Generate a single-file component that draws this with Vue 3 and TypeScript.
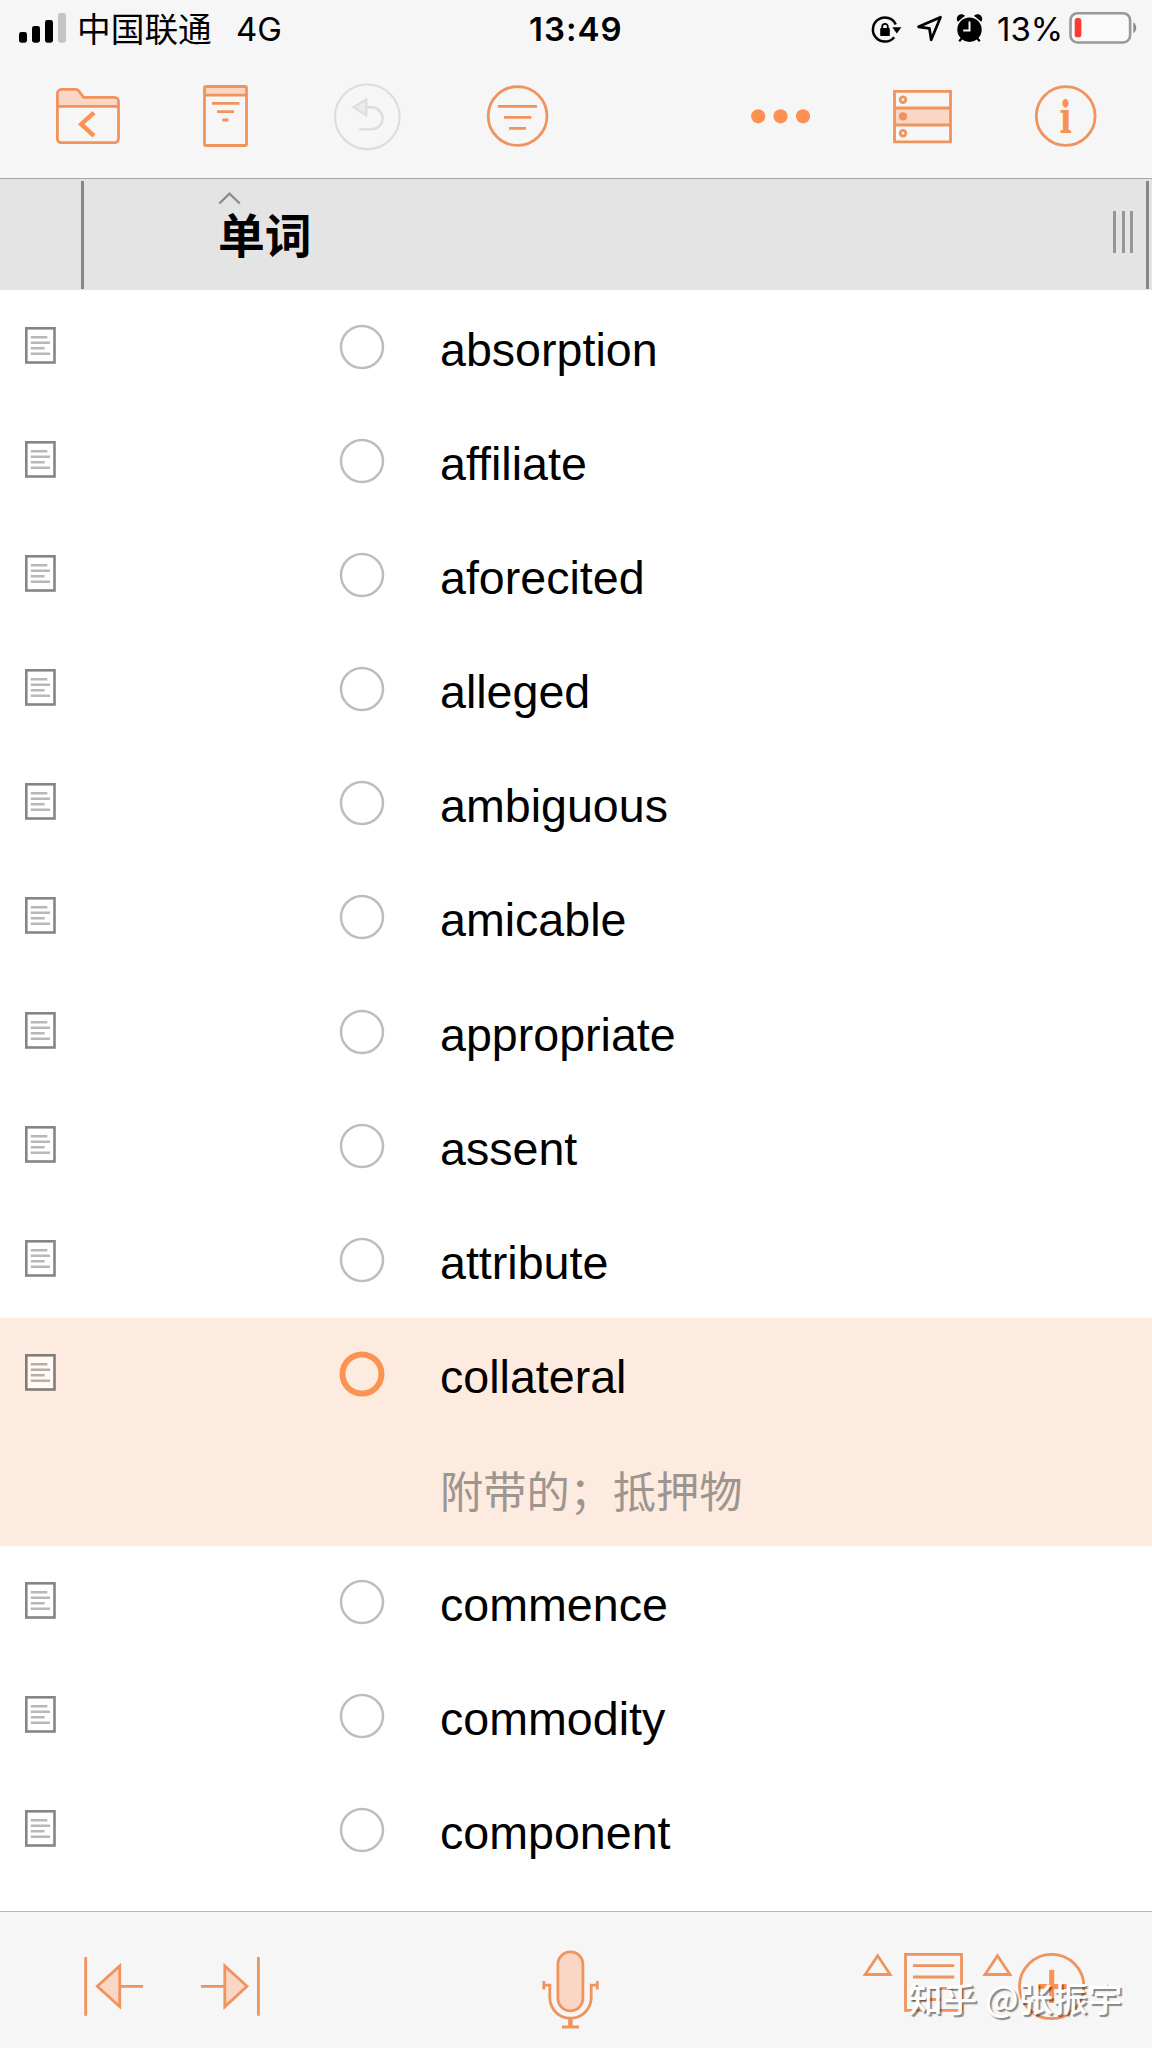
<script setup lang="ts">
interface Entry {
  word: string
  note?: string
  selected?: boolean
}

const entries: Entry[] = [
  { word: 'absorption' },
  { word: 'affiliate' },
  { word: 'aforecited' },
  { word: 'alleged' },
  { word: 'ambiguous' },
  { word: 'amicable' },
  { word: 'appropriate' },
  { word: 'assent' },
  { word: 'attribute' },
  { word: 'collateral', note: '附带的；抵押物', selected: true },
  { word: 'commence' },
  { word: 'commodity' },
  { word: 'component' },
]
</script>

<template>
  <div class="screen">
    <header class="top">
      <div class="status">
        <svg class="signal" width="48" height="30" viewBox="19 13 48 30">
          <rect x="19" y="32" width="8" height="10.7" rx="2.4" />
          <rect x="32" y="26" width="8" height="16.7" rx="2.4" />
          <rect x="45" y="20" width="8" height="22.7" rx="2.4" />
          <rect x="58" y="13" width="8" height="29.7" rx="2.4" fill="#c4c4c4" />
        </svg>
        <span class="carrier">中国联通</span>
        <span class="network">4G</span>
        <span class="clock">13:49</span>
        <svg class="indicators" width="118" height="58" viewBox="868 0 118 58">
          <path d="M895.8 24.5A12 12 0 1 0 894.2 37.2" fill="none" stroke="#000" stroke-width="2.5" />
          <path d="M892.3 27.2H901.4L896.8 33.6Z" />
          <rect x="880.2" y="28" width="9.6" height="8" rx=".8" />
          <path d="M882.2 29v-2.3a2.8 2.8 0 0 1 5.6 0V29" fill="none" stroke="#000" stroke-width="1.8" />
          <path d="M918.5 26.8L940.5 17.2L931.2 39.8L929.4 28.4Z" fill="none" stroke="#000" stroke-width="2.7" stroke-linejoin="round" />
          <circle cx="969.5" cy="29.7" r="12.2" />
          <path d="M958.4 21.3a3.9 3.9 0 0 1 6-5M974.6 16.3a3.9 3.9 0 0 1 6 5" fill="#000" stroke="#000" stroke-width="1.4" />
          <path d="M962.5 37.5l-3.3 3.7M976.5 37.5l3.3 3.7" stroke="#000" stroke-width="2.2" />
          <path d="M969.5 21.6V30.4H963.2" fill="none" stroke="#f6f6f6" stroke-width="2" />
        </svg>
        <span class="percent">13%</span>
        <svg class="battery" width="70" height="34" viewBox="1069 11 70 34">
          <rect x="1070.5" y="13.2" width="59.6" height="29.3" rx="7" fill="#fafafa" stroke="#999" stroke-width="2.6" />
          <rect x="1074.7" y="18" width="6.6" height="19.3" rx="2.6" fill="#fb3b30" />
          <path d="M1133.3 22.3a6.6 6.6 0 0 1 0 11z" fill="#8c8c8c" />
        </svg>
      </div>

      <div class="tools">
        <svg class="folder" width="66" height="120" viewBox="55 58 66 120">
          <path d="M57.4 106V93.5a4 4 0 0 1 4-4.1H75.5a4 4 0 0 1 3.2 1.5L83.6 97.4H114.5a4 4 0 0 1 4 4V106Z" class="tint" />
          <path d="M57.4 93.5a4 4 0 0 1 4-4.1H75.5a4 4 0 0 1 3.2 1.5L83.6 97.4H114.5a4 4 0 0 1 4 4V138.6a4 4 0 0 1-4 4H61.4a4 4 0 0 1-4-4ZM57 106.3H119" class="line" />
          <path d="M94 112.6L81.2 124.2L94 135.9" fill="none" stroke="#fd9151" stroke-width="4.4" />
        </svg>
        <svg class="archive" width="46" height="120" viewBox="203 58 46 120">
          <rect x="204.5" y="86.3" width="42" height="9" class="tint" />
          <rect x="204.5" y="86.5" width="42" height="59" rx="1.5" class="line" />
          <path d="M204 95.2H247M212 103.4H239.5M217 111.7H234M222.3 120H228.5" class="line" />
        </svg>
        <svg class="undo" width="68" height="120" viewBox="333 58 68 120">
          <circle cx="367.3" cy="116.8" r="32.3" fill="none" stroke="#ddd" stroke-width="2.2" />
          <path d="M353.6 107.3L366.3 99.5V115.2Z" fill="#ebebeb" stroke="#ddd" stroke-width="2.2" />
          <path d="M366.5 107.3H371.6a11 11 0 0 1 0 22.1H359.3" fill="none" stroke="#ddd" stroke-width="2.4" />
        </svg>
        <svg class="filter" width="63" height="120" viewBox="486 58 63 120">
          <circle cx="517.6" cy="116" r="29.4" class="line" />
          <path d="M498 106.4H537M504 117.4H531.3M509 128.4H526" class="line" />
        </svg>
        <svg class="more" width="62" height="120" viewBox="750 58 62 120" fill="#fd9151">
          <circle cx="758.2" cy="116.3" r="7.1" /><circle cx="780.5" cy="116.3" r="7.1" /><circle cx="803" cy="116.3" r="7.1" />
        </svg>
        <svg class="contents" width="60" height="120" viewBox="893 58 60 120">
          <rect x="894.4" y="108" width="56" height="17" class="tint" />
          <path d="M894.5 91.3H950.5V141.8H894.5ZM894.5 108H950.5M894.5 125H950.5" class="line" />
          <circle cx="903" cy="99.7" r="2.8" class="line" /><circle cx="903" cy="133.2" r="2.8" class="line" />
          <circle cx="903" cy="116.4" r="4.1" fill="#ef925d" />
        </svg>
        <svg class="info" width="62" height="120" viewBox="1035 58 62 120">
          <circle cx="1065.7" cy="116" r="29.4" class="line" />
          <text x="0" y="0" transform="translate(1065.7 133) scale(.74 1)" text-anchor="middle" class="letter">i</text>
        </svg>
      </div>
    </header>

    <div class="heading">
      <i class="rule first"></i>
      <div class="title">
        <svg width="24" height="14" viewBox="218 191 24 14"><path d="M219.3 203.5L229.5 193.6L239.8 203.5" fill="none" stroke="#8c8c8c" stroke-width="2.4" /></svg>
        <span>单词</span>
      </div>
      <div class="grip"><i></i><i></i><i></i></div>
      <i class="rule last"></i>
    </div>

    <main class="list">
      <section v-for="entry in entries" :key="entry.word" class="entry" :class="{ selected: entry.selected }">
        <div class="row">
          <svg class="note-icon" width="31" height="37" viewBox="0 0 31 37">
            <rect x="1.3" y="1.3" width="28.2" height="34.2" fill="#fff" fill-opacity=".75" stroke="#858585" stroke-width="2.6" />
            <path d="M5.8 10.3H22.3M5.8 15.7H25M5.8 21.3H19.6M5.8 26.8H25" stroke="#b8b8b8" stroke-width="2.4" />
          </svg>
          <svg class="handle" width="46" height="46" viewBox="0 0 46 46">
            <circle v-if="entry.selected" cx="23" cy="23" r="19.5" fill="none" stroke="#fb9453" stroke-width="6" />
            <circle v-else cx="23" cy="23" r="21" fill="#fff" stroke="#bdbdbd" stroke-width="2.5" />
          </svg>
          <span class="word">{{ entry.word }}</span>
        </div>
        <p v-if="entry.note" class="meaning">{{ entry.note }}</p>
      </section>
    </main>

    <footer class="bottom">
      <svg class="outdent" width="62" height="136" viewBox="83 1912 62 136">
        <path d="M97.3 1986.3L119.7 1966V2006.7Z" class="tint line" />
        <path d="M85.7 1957V2015.8M120 1986.3H143" class="line" />
      </svg>
      <svg class="indent" width="62" height="136" viewBox="200 1912 62 136">
        <path d="M247 1986.3L224.8 1966V2006.7Z" class="tint line" />
        <path d="M258.4 1957V2015.8M201 1986.3H224" class="line" />
      </svg>
      <svg class="mic" width="60" height="136" viewBox="541 1912 60 136">
        <rect x="557.9" y="1951.8" width="25" height="59" rx="12.5" class="tint line" />
        <path d="M543.8 1981V1989.5M597.3 1981V1989.5M544 1985.2H549.8V1997.5a20.7 20.7 0 0 0 41.4 0V1985.2H597M562 2027H579" class="line" />
        <path d="M570.4 2018V2026" stroke="#ef925d" stroke-width="4.5" />
      </svg>
      <svg class="add-note" width="102" height="136" viewBox="862 1912 102 136">
        <path d="M865.2 1974.5L877.7 1955.8L890.2 1974.5Z" class="line" />
        <path d="M905.5 1954.4H961.5V2010.4H905.5ZM913 1965.7H954.3M913 1977H954.3M913 1988.3H954.3M913 1999.5H941" class="line" />
      </svg>
      <svg class="add-row" width="105" height="136" viewBox="982 1912 105 136">
        <path d="M985 1974.5L997.5 1955.8L1010 1974.5Z" class="line" />
        <circle cx="1051.7" cy="1986.5" r="32.2" class="line" />
        <path d="M1051.7 1970V2003M1035.2 1986.5H1068.2" stroke="#fd9151" stroke-width="5" />
      </svg>
      <span class="watermark">知乎 @张振宇</span>
    </footer>
  </div>
</template>

<style>
body {
  margin: 0;
}
</style>

<style scoped>
.screen {
  display: flex;
  flex-direction: column;
  width: 1152px;
  height: 2048px;
  overflow: hidden;
  background: #fff;
  color: #000;
  font-family: 'Liberation Sans', 'Noto Sans CJK SC', sans-serif;
}
svg {
  display: block;
  flex: none;
}
.line {
  stroke: #f0935d;
  stroke-width: 2.8;
  fill: none;
}
.tint {
  fill: #fad7c4;
}
.top {
  height: 178px;
  flex: none;
  background: #f6f6f6;
  border-bottom: 1px solid #a6a6a6;
}
.status {
  display: flex;
  align-items: center;
  height: 58px;
  font-family: Inter, 'Noto Sans CJK SC', sans-serif;
  font-size: 33px;
  line-height: 58px;
  white-space: nowrap;
}
.signal {
  margin-left: 19px;
  margin-top: -2px;
}
.carrier {
  width: 159px;
  margin: -2px 0 0 10px;
  font-family: 'Noto Sans CJK SC', sans-serif;
  font-size: 33.7px;
}
.network {
  width: 293px;
}
.clock {
  width: 339px;
  font-weight: 600;
  letter-spacing: 1px;
}
.percent {
  width: 72px;
  margin-left: 11px;
}
.battery {
  margin-top: -2px;
}
.tools {
  display: flex;
  height: 120px;
}
.folder { margin-left: 55px; }
.archive { margin-left: 82px; }
.undo { margin-left: 84px; }
.filter { margin-left: 85px; }
.more { margin-left: 201px; }
.contents { margin-left: 81px; }
.info { margin-left: 82px; }
.letter {
  font-family: 'DejaVu Serif', serif;
  font-size: 44px;
  font-weight: 700;
  fill: #f89154;
}
.heading {
  display: flex;
  flex: none;
  height: 111px;
  background: #e4e4e4;
}
.rule {
  width: 3px;
  height: 108px;
  margin-top: 2px;
  background: #868686;
}
.first {
  margin-left: 81px;
}
.title {
  flex: 1;
  padding: 12px 0 0 134px;
  font-family: 'Noto Sans CJK SC', sans-serif;
  font-size: 46.8px;
  font-weight: 700;
  line-height: 56px;
}
.title span {
  display: block;
}
.grip {
  display: flex;
  gap: 5.4px;
  height: 42px;
  margin: 32px 13px 0 0;
}
.grip i {
  width: 3px;
  background: #969696;
}
.last {
  margin-right: 3px;
}
.list {
  flex: 1;
  padding-top: 1px;
}
.entry {
  background: #fff;
}
.selected {
  background: #feebdf;
}
.row {
  display: flex;
  height: 114.1px;
}
.note-icon {
  margin: 36px 0 0 25px;
}
.handle {
  margin: 33px 0 0 282.5px;
}
.selected .note-icon rect {
  stroke: #857b75;
}
.selected .note-icon path {
  stroke: #b8aca6;
}
.word {
  margin-left: 55.5px;
  padding-top: 32px;
  font-size: 46.6px;
  line-height: 54px;
}
.meaning {
  height: 114.1px;
  margin: 0 0 0 440px;
  color: #9c9590;
  font-family: 'Noto Sans CJK SC', sans-serif;
  font-size: 43.2px;
  line-height: 115px;
}
.bottom {
  position: relative;
  display: flex;
  flex: none;
  height: 136px;
  background: #f6f6f6;
  border-top: 1px solid #b8b8b8;
}
.outdent { margin-left: 83px; }
.indent { margin-left: 55px; }
.mic { margin-left: 279px; }
.add-note { margin-left: 261px; }
.add-row { margin-left: 18px; }
.watermark {
  position: absolute;
  left: 908px;
  top: 58px;
  color: #fff;
  font-family: 'Noto Sans CJK SC', sans-serif;
  font-size: 34.6px;
  font-weight: 500;
  line-height: 54px;
  white-space: nowrap;
  text-shadow: 2px 2px 1px rgba(0, 0, 0, 0.45);
}
</style>
